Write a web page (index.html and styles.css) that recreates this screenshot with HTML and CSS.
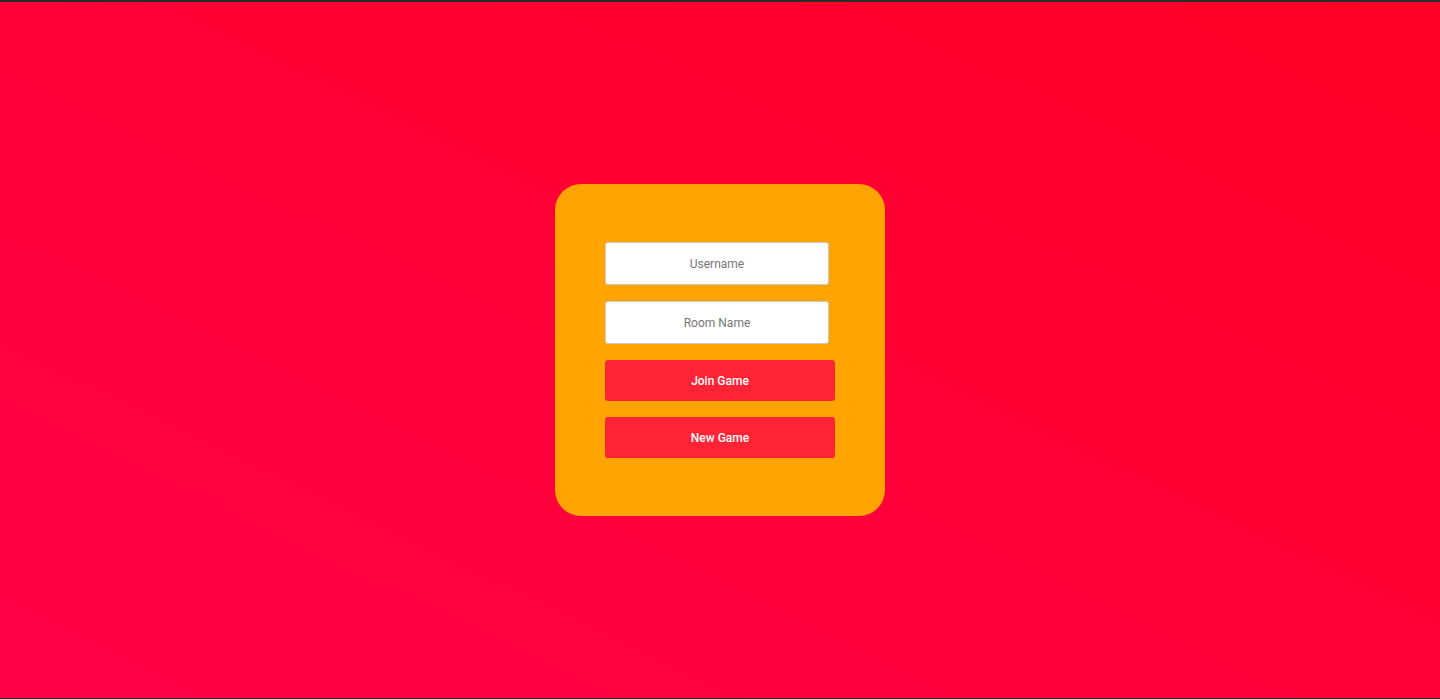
FILE: index.html
```html
<!DOCTYPE html>
<html lang="en">
<head>
<meta charset="utf-8">
<title>Game Lobby</title>
<link rel="stylesheet" href="styles.css">
</head>
<body>
<main class="page">
  <form class="card">
    <input class="field" type="text" placeholder="Username">
    <input class="field" type="text" placeholder="Room Name">
    <button class="btn" type="button">Join Game</button>
    <button class="btn" type="button">New Game</button>
  </form>
</main>
</body>
</html>
```
FILE: styles.css
```css
html, body {
  margin: 0;
  padding: 0;
  height: 100%;
}
body {
  font-family: Roboto, "Liberation Sans", Arial, sans-serif;
}
.page {
  box-sizing: border-box;
  height: 699px;
  border-top: 2px solid #2b2b2b;
  border-bottom: 1px solid #2b2b2b;
  background: linear-gradient(to top right, #ff0048 0%, #ff0038 50%, #ff0026 100%);
  display: flex;
  align-items: center;
  justify-content: center;
}
.card {
  box-sizing: border-box;
  width: 330px;
  height: 332px;
  padding: 58px 50px;
  background: #ffa400;
  border-radius: 26px;
  display: flex;
  flex-direction: column;
  gap: 16px;
}
.field {
  box-sizing: border-box;
  width: 224px;
  height: 43px;
  margin: 0;
  border: 1px solid #c8c8c8;
  border-radius: 3px;
  background: #fff;
  text-align: center;
  font-family: Roboto, "Liberation Sans", Arial, sans-serif;
  font-size: 12px;
  color: #333;
  outline: none;
}
.field::placeholder {
  color: #767676;
}
.btn {
  box-sizing: border-box;
  width: 230px;
  height: 41px;
  margin: 0;
  border: none;
  border-radius: 3px;
  background: #ff2336;
  color: #fff;
  font-family: Roboto, "Liberation Sans", Arial, sans-serif;
  font-size: 12px;
  font-weight: 500;
  cursor: pointer;
}
```
